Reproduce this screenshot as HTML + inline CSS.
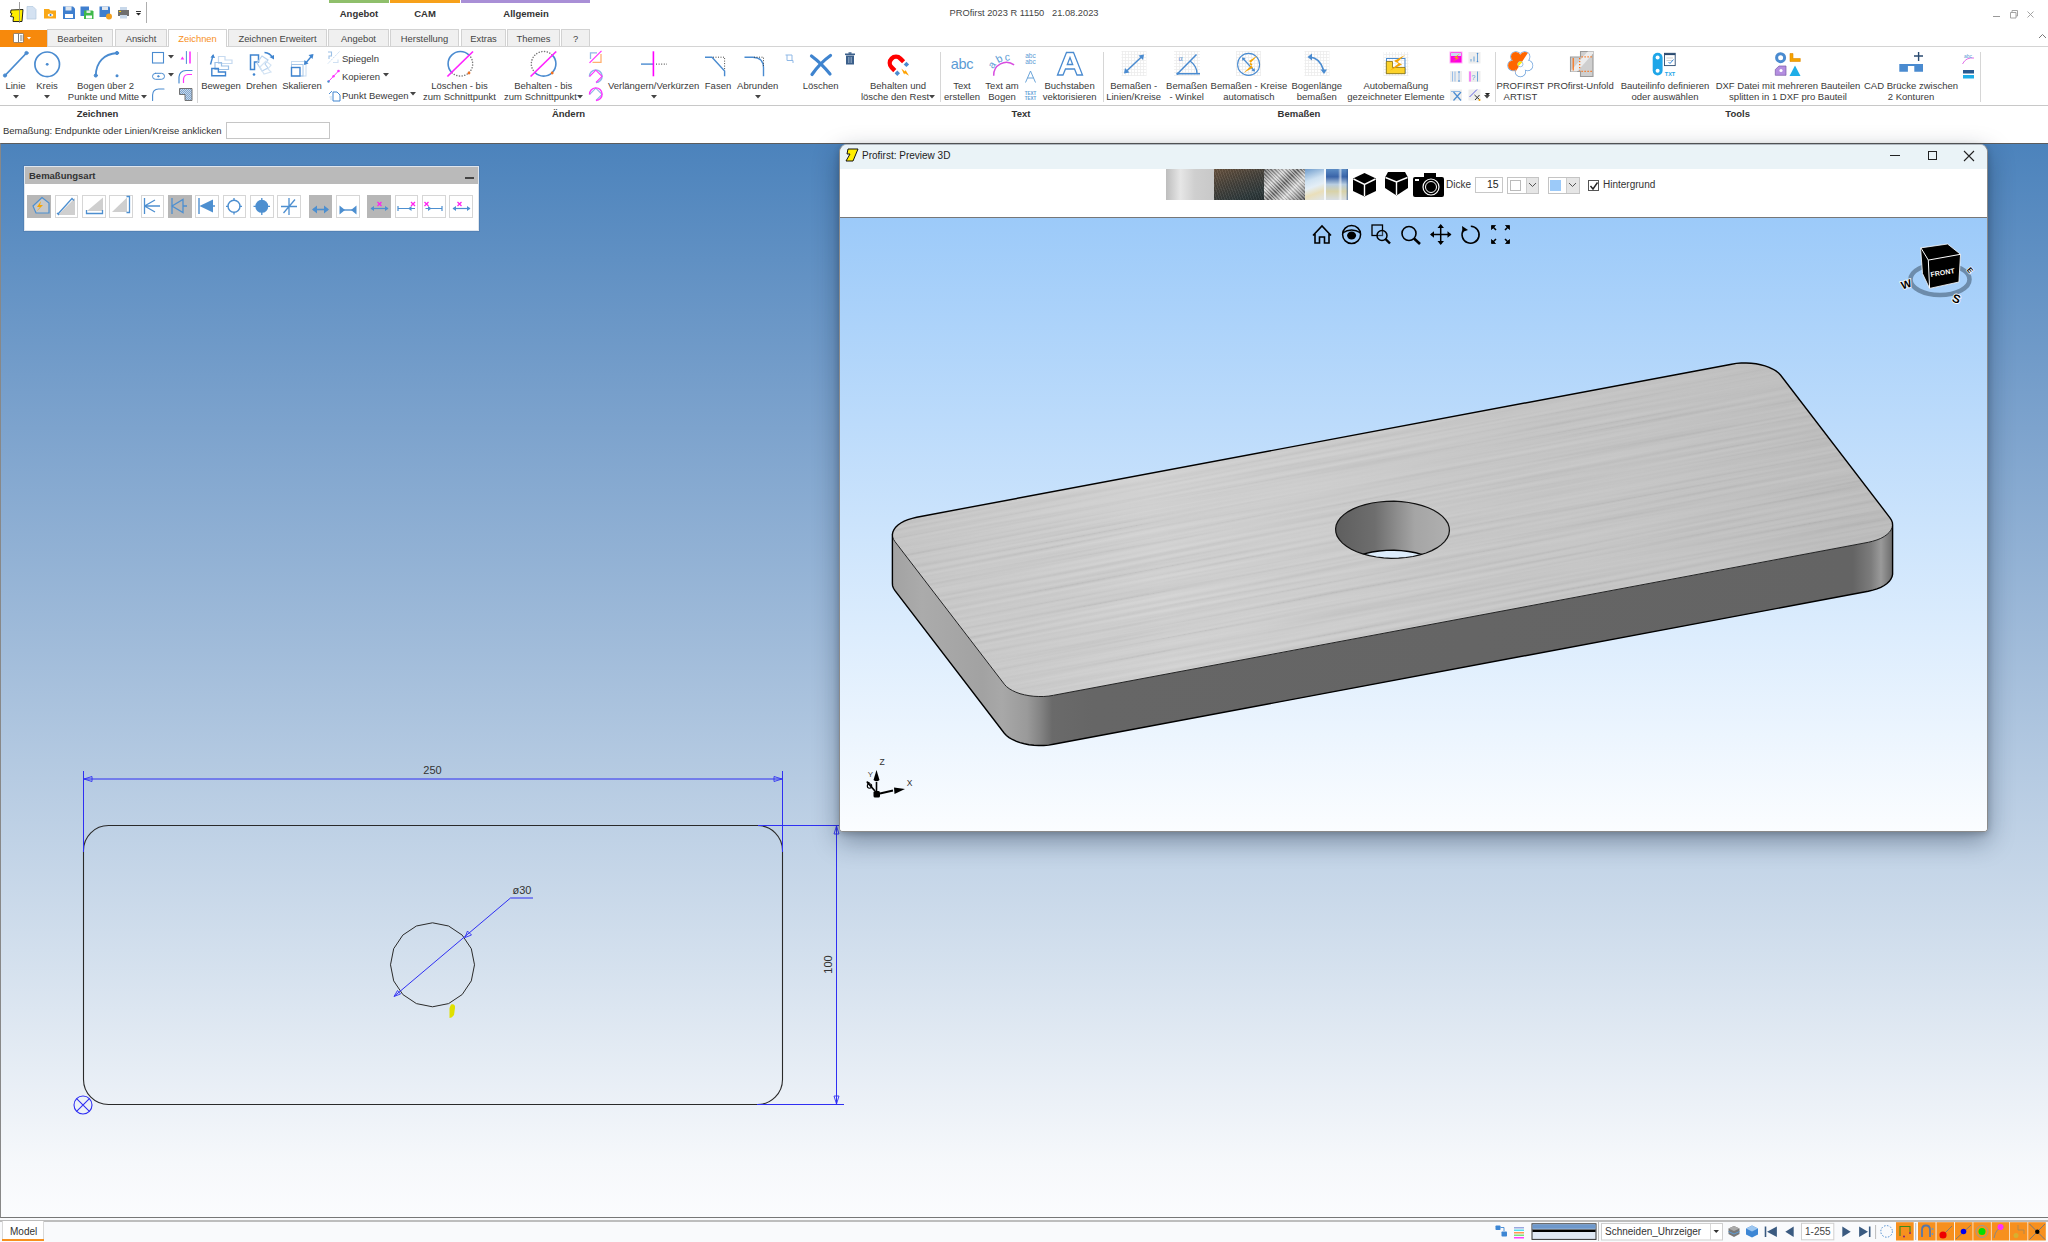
<!DOCTYPE html>
<html><head><meta charset="utf-8">
<style>
*{box-sizing:border-box}
html,body{margin:0;padding:0}
body{width:2048px;height:1242px;overflow:hidden;position:relative;background:#fff;font-family:"Liberation Sans",sans-serif;color:#333}
.a{position:absolute}
.t{position:absolute;white-space:nowrap;font-size:9.5px;line-height:11px;color:#3a3a3a}
.c{text-align:center;transform:translateX(-50%)}
.b{font-weight:bold}
svg{position:absolute;overflow:visible}
</style></head><body>

<!-- ===== TITLE BAR ===== -->
<div class="a" style="left:329px;top:0;width:60px;height:3px;background:#8fbf6b"></div>
<div class="a" style="left:390px;top:0;width:70px;height:3px;background:#f7a11a"></div>
<div class="a" style="left:461px;top:0;width:129px;height:3px;background:#a98fd6"></div>
<div class="t b c" style="left:359px;top:8px;font-size:9.5px;color:#333">Angebot</div>
<div class="t b c" style="left:425px;top:8px;font-size:9.5px;color:#333">CAM</div>
<div class="t b c" style="left:526px;top:8px;font-size:9.5px;color:#333">Allgemein</div>
<div class="t c" style="left:1024px;top:8px;font-size:9.3px;color:#444">PROfirst 2023 R 11150 &nbsp; 21.08.2023</div>

<!-- ===== TABS ===== -->
<div class="a" style="left:0;top:46px;width:2048px;height:1px;background:#d4d4d4"></div>
<!-- quick access -->
<svg style="left:0;top:0" width="160" height="28" viewBox="0 0 160 28">
<path d="M11,10 L23,9.5 L22,21.5 L13,21.5 L13.5,17 L10.5,16.5 L12,13.5 L10.5,13 Z" fill="#ffee00" stroke="#111" stroke-width="0.9"/>
<path d="M19.5,2 L19.5,23" stroke="#888" stroke-width="0.8"/>
<path d="M27,6.5 L33,6.5 L36,9.5 L36,19 L27,19 Z" fill="#d4e2f2" stroke="#b3c8e0" stroke-width="0.7"/>
<path d="M44,9 L49,9 L50.5,10.5 L56,10.5 L56,18.5 L44,18.5 Z" fill="#f9a818"/><ellipse cx="50.5" cy="15" rx="2.8" ry="1.6" fill="#fff"/><circle cx="50.5" cy="15" r="1" fill="#2a7ad8"/>
<path d="M63,6.5 L73,6.5 L75,8.5 L75,19 L63,19 Z" fill="#3f7fcf"/><rect x="65.5" y="6.5" width="6" height="4" fill="#dfe6ee"/><rect x="65" y="14" width="8" height="4" fill="#fff"/>
<path d="M80.5,6.5 L89,6.5 L89,16 L80.5,16 Z" fill="#3f7fcf"/><path d="M84,10.5 L92.5,10.5 L93.5,11.5 L93.5,19 L84,19 Z" fill="#3fb94a"/><rect x="86" y="15.5" width="6" height="3" fill="#fff"/><rect x="86.5" y="10.5" width="4" height="2.5" fill="#dfeee0"/>
<path d="M99.5,6.5 L109.5,6.5 L110,8 L110,17 L99.5,17 Z" fill="#3f7fcf"/><rect x="102" y="6.5" width="6" height="3.5" fill="#dfe6ee"/><ellipse cx="109" cy="16.5" rx="3" ry="3" fill="#f2a020"/>
<rect x="118" y="10" width="11" height="6" fill="#6f6f6f"/><rect x="120" y="7" width="7" height="3" fill="#c8d8ea"/><rect x="120" y="15" width="7" height="3.5" fill="#c8d8ea"/><rect x="119" y="11" width="2" height="1" fill="#ffd400"/>
<path d="M136,11.5 L141,11.5" stroke="#222" stroke-width="0.9"/><path d="M136,13 L141,13 L138.5,15.5 Z" fill="#222"/>
<path d="M146.5,2 L146.5,23" stroke="#999" stroke-width="0.8"/>
</svg>
<!-- window controls -->
<div class="a" style="left:1993px;top:16px;width:7px;height:1px;background:#999"></div>
<svg style="left:2009px;top:9px" width="10" height="10" viewBox="0 0 10 10"><path d="M1.5,3.5 h5.5 v5.5 h-5.5 z M3,3.5 v-2 h5.5 v5.5 h-1.5" stroke="#9a9a9a" stroke-width="0.9" fill="none"/></svg>
<svg style="left:2026px;top:10px" width="9" height="9" viewBox="0 0 9 9"><path d="M1.5,1.5 L7.5,7.5 M7.5,1.5 L1.5,7.5" stroke="#9a9a9a" stroke-width="0.9"/></svg>
<svg style="left:2038px;top:33px" width="9" height="6" viewBox="0 0 9 6"><path d="M1,5 L4.5,1.5 L8,5" stroke="#777" stroke-width="1" fill="none"/></svg>
<!-- tabs -->
<div class="a" style="left:0;top:30px;width:47px;height:17px;background:#f7890c"></div>
<svg style="left:12px;top:32px" width="24" height="12" viewBox="0 0 24 12"><rect x="1.5" y="1.5" width="10" height="9" rx="1" fill="#fff" stroke="#555" stroke-width="0.6"/><path d="M6.5,2 L6.5,10 M8,4 L10.5,4 M8,6 L10.5,6 M8,8 L10.5,8" stroke="#555" stroke-width="0.8"/><path d="M15,5 L19,5 L17,7.5 Z" fill="#fff"/></svg>
<div class="a" style="left:47px;top:29px;width:66px;height:17px;background:#f0f0f0;border:1px solid #d2d2d2;border-bottom:none"></div>
<div class="t c" style="left:80.0px;top:33px;font-size:9.4px;color:#444">Bearbeiten</div>
<div class="a" style="left:115px;top:29px;width:52px;height:17px;background:#f0f0f0;border:1px solid #d2d2d2;border-bottom:none"></div>
<div class="t c" style="left:141.0px;top:33px;font-size:9.4px;color:#444">Ansicht</div>
<div class="a" style="left:168px;top:29px;width:59px;height:18px;background:#fff;border:1px solid #d2d2d2;border-bottom:none"></div>
<div class="t c" style="left:197.5px;top:33px;font-size:9.4px;color:#f7901e">Zeichnen</div>
<div class="a" style="left:228px;top:29px;width:99px;height:17px;background:#f0f0f0;border:1px solid #d2d2d2;border-bottom:none"></div>
<div class="t c" style="left:277.5px;top:33px;font-size:9.4px;color:#444">Zeichnen Erweitert</div>
<div class="a" style="left:328px;top:29px;width:61px;height:17px;background:#f0f0f0;border:1px solid #d2d2d2;border-bottom:none"></div>
<div class="t c" style="left:358.5px;top:33px;font-size:9.4px;color:#444">Angebot</div>
<div class="a" style="left:390px;top:29px;width:69px;height:17px;background:#f0f0f0;border:1px solid #d2d2d2;border-bottom:none"></div>
<div class="t c" style="left:424.5px;top:33px;font-size:9.4px;color:#444">Herstellung</div>
<div class="a" style="left:461px;top:29px;width:45px;height:17px;background:#f0f0f0;border:1px solid #d2d2d2;border-bottom:none"></div>
<div class="t c" style="left:483.5px;top:33px;font-size:9.4px;color:#444">Extras</div>
<div class="a" style="left:507px;top:29px;width:53px;height:17px;background:#f0f0f0;border:1px solid #d2d2d2;border-bottom:none"></div>
<div class="t c" style="left:533.5px;top:33px;font-size:9.4px;color:#444">Themes</div>
<div class="a" style="left:561px;top:29px;width:29px;height:17px;background:#f0f0f0;border:1px solid #d2d2d2;border-bottom:none"></div>
<div class="t c" style="left:575.5px;top:33px;font-size:9.4px;color:#444">?</div>


<!-- ===== RIBBON ===== -->
<!--RIBICONS-->
<svg style="left:0;top:0" width="2048" height="110" viewBox="0 0 2048 110">
<defs>
<pattern id="grid" width="3" height="3" patternUnits="userSpaceOnUse"><rect width="3" height="3" fill="#fff"/><path d="M0,0.5 H3 M0.5,0 V3" stroke="#e4e4e4" stroke-width="0.8"/></pattern>
<pattern id="chk" width="2" height="2" patternUnits="userSpaceOnUse"><rect width="2" height="2" fill="#7fa6d0"/><rect width="1" height="1" fill="#c8d8ea"/><rect x="1" y="1" width="1" height="1" fill="#c8d8ea"/></pattern>
</defs>
<g stroke="#4a8bd0" fill="none" stroke-linecap="round">
<!-- Linie -->
<path d="M5,75.5 L26.5,53" stroke-width="1.8"/><circle cx="5" cy="75.5" r="1.6" fill="#4a8bd0"/><circle cx="26.5" cy="53" r="1.6" fill="#4a8bd0"/>
<!-- Kreis -->
<circle cx="47.2" cy="64.3" r="12.3" stroke-width="1.7"/><circle cx="47.2" cy="64.3" r="1.4" fill="#4a8bd0" stroke="none"/>
<!-- Bogen -->
<path d="M95.8,75.5 C96,62 104,54 117,53" stroke-width="1.8"/><circle cx="95.8" cy="75.5" r="1.6" fill="#4a8bd0"/><circle cx="117" cy="53" r="1.6" fill="#4a8bd0"/><circle cx="117" cy="75.8" r="1.5" fill="#4a8bd0" stroke="none"/>
<!-- small zeichnen -->
<rect x="152.5" y="52.5" width="11" height="10.5" stroke-width="1.1"/>
<rect x="152.5" y="73.3" width="12" height="6" rx="3" stroke-width="1"/><circle cx="158.3" cy="76.3" r="0.7" fill="#4a8bd0"/>
<path d="M152.6,100.5 L152.6,95 Q152.8,89.2 158.5,89 L164,89" stroke-width="1.1"/>
<path d="M186.4,51.5 L186.4,63.5" stroke-width="1"/>
<path d="M179,83 L179,77 Q179.5,70.8 186,70.5 L192,70.5" stroke-width="1.2"/>
</g>
<path d="M190,51.5 L190,63.5" stroke="#ff33ff" stroke-width="1.6"/>
<polygon points="182.4,56.5 180.5,59.5 184.3,59.5" fill="#ff33ff"/>
<path d="M183.5,83 L183.5,79 Q184,74.8 188,74.5 L192,74.5" stroke="#ff33ff" stroke-width="1.2" fill="none"/>
<path d="M179.5,88.5 L192,88.5 L192,100.5 L185,100.5 L185,94.5 L179.5,94.5 Z" fill="url(#chk)" stroke="#666" stroke-width="0.9"/>
<!-- Bewegen -->
<g fill="none" stroke-width="1.2">
<path d="M218.5,56.5 L225,56.5 L225,60 L232,60 L232,63.5 L218.5,63.5 Z" stroke="#c6daf0"/>
<path d="M215,62.5 L221.5,62.5 L221.5,66 L228.5,66 L228.5,69.5 L215,69.5 Z" stroke="#9cc0e6"/>
<path d="M211.8,68.5 L218.4,68.5 L218.4,72 L225.5,72 L225.5,75.8 L211.8,75.8 Z" stroke="#3f84cf" stroke-width="1.4"/>
<path d="M210.5,64.5 L213,55.5" stroke="#3f84cf" stroke-width="1.4"/>
</g>
<polygon points="213.3,54 210.5,57.5 215,58" fill="#3f84cf"/>
<!-- Drehen -->
<path d="M250.5,55 L258.5,55 L258.5,62 L254.5,62 L254.5,69.5 L250.5,69.5 Z" fill="none" stroke="#3f84cf" stroke-width="1.5"/>
<path d="M257,63 L262,56 L268,60 L265,64 L268,68 L262,71 Z" fill="none" stroke="#b8d2ee" stroke-width="1.2"/>
<path d="M260,67 L266,61 L271,65 L268,69 L271,72 L264,74 Z" fill="none" stroke="#d4e4f4" stroke-width="1.2"/>
<circle cx="254" cy="74.5" r="1.3" fill="#3f84cf"/>
<path d="M264.5,52.5 Q270,53 272.5,57.5" fill="none" stroke="#3f84cf" stroke-width="1.5"/>
<polygon points="274,59.5 269.5,57 274,55" fill="#3f84cf"/>
<!-- Skalieren -->
<rect x="291.5" y="61.5" width="14.5" height="14.5" fill="none" stroke="#c8dcf0" stroke-width="1"/>
<rect x="291.5" y="64.5" width="11.5" height="11.5" fill="none" stroke="#a6c6e8" stroke-width="1"/>
<rect x="291.5" y="67.5" width="8.5" height="8.5" fill="none" stroke="#3f84cf" stroke-width="1.4"/>
<path d="M305,64 L312.5,55" stroke="#3f84cf" stroke-width="1.4"/>
<polygon points="313.5,54 308.5,55 312.5,59" fill="#3f84cf"/><polygon points="304,65 304.5,60 308.5,63.5" fill="#3f84cf"/>
<!-- Spiegeln / Kopieren / Punkt bewegen -->
<path d="M328,52 L331.5,52 L331.5,56 L329,56 L329,59" fill="none" stroke="#9cc0e6" stroke-width="1.1"/>
<path d="M328,63.5 L340,51" stroke="#b8d2ee" stroke-width="0.9" stroke-dasharray="1.5,1"/>
<path d="M333,62.5 L338,62.5 L338,59.5" fill="none" stroke="#d0e0f2" stroke-width="1.1"/>
<path d="M328.5,81.5 L338.5,71" stroke="#ff33ff" stroke-width="1"/><circle cx="338.5" cy="71" r="1.3" fill="#ff33ff"/><circle cx="333.5" cy="76.2" r="1.2" fill="#ff33ff"/><circle cx="328.5" cy="81.5" r="1.2" fill="#4a8bd0"/>
<path d="M333,92 L337,92 L340,95 L340,101 L333,101 Z" fill="none" stroke="#3f84cf" stroke-width="1"/>
<path d="M329,94 L332,91" stroke="#3f84cf" stroke-width="0.9"/><path d="M329.5,97 L332,97 M330,99 L332,99" stroke="#b8d2ee" stroke-width="0.9"/>
<!-- Loeschen bis / Behalten bis -->
<path d="M469.1,55.1 A12.3,12.3 0 0 1 451.7,72.5" fill="none" stroke="#777" stroke-width="1.5" stroke-dasharray="0.1,2.6" stroke-linecap="round"/><path d="M451.7,72.5 A12.3,12.3 0 0 1 469.1,55.1" fill="none" stroke="#4a8bd0" stroke-width="1.6"/><path d="M447.4,76.5 L473.0,51.5" stroke="#ff22ff" stroke-width="1.7"/><circle cx="469.0" cy="73.0" r="1.4" fill="#f07020"/>
<path d="M534.9,72.5 A12.3,12.3 0 0 1 552.3,55.1" fill="none" stroke="#777" stroke-width="1.5" stroke-dasharray="0.1,2.6" stroke-linecap="round"/><path d="M552.3,55.1 A12.3,12.3 0 0 1 534.9,72.5" fill="none" stroke="#4a8bd0" stroke-width="1.6"/><path d="M530.6,76.5 L556.2,51.5" stroke="#ff22ff" stroke-width="1.7"/><circle cx="552.2" cy="73.0" r="1.4" fill="#f07020"/>
<!-- small aendern col -->
<path d="M590.5,59 L590.5,52.8 L597,52.8" fill="none" stroke="#8fb8e6" stroke-width="1.3"/>
<path d="M601,54 L601,62.3 L592.5,62.3" fill="none" stroke="#ffb070" stroke-width="1.3"/>
<path d="M589.5,62.8 L601.5,50.8" stroke="#ff33ff" stroke-width="1.2"/>
<path d="M589.5,76.5 A6.3,6.3 0 1 1 596,82.5" fill="none" stroke="#8fb8e6" stroke-width="1.5"/>
<path d="M589.5,76.5 L595.8,70.2 L602,76.3 L596,82.5" fill="none" stroke="#ff33ff" stroke-width="1.1"/>
<path d="M589.5,94.5 L595.8,88.2 L602,94.3 L596,100.5" fill="none" stroke="#8fb8e6" stroke-width="1.1"/>
<path d="M589.5,94.5 A6.3,6.3 0 1 1 596,100.5" fill="none" stroke="#ff33ff" stroke-width="1.4"/>
<!-- Verlaengern -->
<path d="M641,64.1 L653.4,64.1" stroke="#4a8bd0" stroke-width="1.4"/>
<path d="M653.4,51.3 L653.4,76.3" stroke="#ff00ff" stroke-width="1.6"/>
<path d="M656,64.1 L667,64.1" stroke="#333" stroke-width="1" stroke-dasharray="1,1.6"/>
<!-- Fasen -->
<path d="M705,57.2 L712,57.2 L724.6,71 L724.6,76.3" fill="none" stroke="#4a8bd0" stroke-width="1.4"/>
<path d="M713,57.2 L724.6,57.2 L724.6,70" fill="none" stroke="#333" stroke-width="0.9" stroke-dasharray="1,1.5"/>
<!-- Abrunden -->
<path d="M744.5,57.2 L753,57.2 Q763.5,57.5 763.5,67.8 L763.5,76.3" fill="none" stroke="#4a8bd0" stroke-width="1.4"/>
<path d="M754,57.2 L763.5,57.2 L763.5,66" fill="none" stroke="#333" stroke-width="0.9" stroke-dasharray="1,1.5"/>
<path d="M785.5,55 L787,55 L787,60.5 L793,60.5 L793,63 M787,55 L792,55 L792,60" fill="none" stroke="#8fb8e6" stroke-width="1"/>
<!-- Loeschen X -->
<path d="M811.5,56 Q821,63 830,74 M830.5,55.5 Q820,63 812,74.5" fill="none" stroke="#3f84cf" stroke-width="3.2" stroke-linecap="round"/>
<!-- trash -->
<rect x="846" y="55.5" width="8" height="9" fill="#3b5f8a"/><rect x="845" y="53.5" width="10" height="1.6" fill="#3b5f8a"/><rect x="848.5" y="52.3" width="3" height="1.5" fill="#3b5f8a"/><path d="M848.5,57 V63 M850,57 V63 M851.5,57 V63" stroke="#a8bcd4" stroke-width="0.6"/>
<!-- Magnet -->
<path d="M894.8,70.6 L891.6,67.4 A6.2,6.2 0 0 1 900.4,58.6 L903.6,61.8" fill="none" stroke="#ff0000" stroke-width="4.4"/>
<rect x="895.4" y="71.4" width="3.8" height="3.8" fill="#4a8bd0" transform="rotate(45 897.3 73.3)"/>
<rect x="904.5" y="62.5" width="3.8" height="3.8" fill="#4a8bd0" transform="rotate(45 906.4 64.4)"/>
<polygon points="901.3,68.5 905,71.5 905.5,70 909,75.8 904.8,73.2 904.2,74.5" fill="#ffa200"/>
</svg>

<svg style="left:0;top:0" width="2048" height="110" viewBox="0 0 2048 110">
<defs><pattern id="grid2" width="3" height="3" patternUnits="userSpaceOnUse"><rect width="3" height="3" fill="#fff"/><path d="M0,0.5 H3 M0.5,0 V3" stroke="#ececec" stroke-width="0.8"/></pattern></defs>
<!-- Text erstellen -->
<text x="962" y="69" font-size="14.5" fill="#5b9bd5" text-anchor="middle" font-family="Liberation Sans" letter-spacing="-0.3">abc</text>
<!-- Text am Bogen -->
<text x="0" y="3.8" font-size="10.5" fill="#5b9bd5" text-anchor="middle" font-family="Liberation Sans" transform="translate(991.6,64.6) rotate(-55)">a</text>
<text x="0" y="3.8" font-size="10.5" fill="#5b9bd5" text-anchor="middle" font-family="Liberation Sans" transform="translate(999,58.6) rotate(-28)">b</text>
<text x="0" y="3.8" font-size="10.5" fill="#5b9bd5" text-anchor="middle" font-family="Liberation Sans" transform="translate(1007.3,56.8) rotate(-5)">c</text>
<path d="M993.7,75.8 A12.8,12.8 0 0 1 1014.1,64.9" fill="none" stroke="#d84de0" stroke-width="1.5"/>
<text x="1030.5" y="57.5" font-size="6.5" fill="#5b9bd5" text-anchor="middle" font-family="Liberation Sans">abc</text>
<text x="1030.5" y="63.5" font-size="6.5" fill="#5b9bd5" text-anchor="middle" font-family="Liberation Sans">abc</text>
<path d="M1025.5,82.5 L1030.5,71 L1035.5,82.5 M1027.5,78 L1033.5,78" fill="none" stroke="#5b9bd5" stroke-width="0.9"/>
<text x="1030.5" y="94.5" font-size="4.5" font-weight="bold" fill="#5b9bd5" text-anchor="middle" font-family="Liberation Sans">TEXT</text>
<text x="1030.5" y="99.5" font-size="4.5" font-weight="bold" fill="#5b9bd5" text-anchor="middle" font-family="Liberation Sans">TEXT</text>
<!-- Buchstaben vektorisieren -->
<path d="M1057.5,75 L1066.5,52.5 L1073.5,52.5 L1082.5,75 L1077,75 L1074.5,69 L1065.5,69 L1063,75 Z M1067.3,64.5 L1072.7,64.5 L1070,57.5 Z" fill="none" stroke="#4a8bd0" stroke-width="1.3"/>
<path d="M1059.5,74 L1067.5,54 L1072.5,54 L1080.5,74" fill="none" stroke="#fff" stroke-width="0.6"/>
<!-- Bemassen Linien -->
<rect x="1121.5" y="51" width="25" height="25" fill="url(#grid2)"/>
<path d="M1125.5,72 L1142.5,56" stroke="#4a8bd0" stroke-width="1.5"/>
<polygon points="1124,73.5 1125,68 1129.5,72.5" fill="#4a8bd0"/><polygon points="1144,54.5 1138.5,55.5 1143,60" fill="#4a8bd0"/>
<!-- Winkel -->
<rect x="1174" y="51" width="26" height="25" fill="url(#grid2)"/>
<path d="M1177.5,73.8 L1200,73.8 M1177.5,73.8 L1196.5,54.5" stroke="#4a8bd0" stroke-width="1.5" fill="none"/>
<path d="M1190,61 Q1197,66 1197,73.5" stroke="#4a8bd0" stroke-width="1.4" fill="none"/><circle cx="1177.5" cy="73.8" r="1.2" fill="#4a8bd0"/>
<text x="1180.5" y="61" font-size="8" fill="#5b8fd0" text-anchor="middle" font-family="Liberation Serif">α</text>
<!-- Kreise auto -->
<rect x="1236" y="51" width="25" height="25" fill="url(#grid2)"/>
<circle cx="1248.6" cy="64.4" r="11" fill="none" stroke="#4a8bd0" stroke-width="1.1"/>
<path d="M1243,58.5 L1254,70.5" stroke="#4a8bd0" stroke-width="1.2"/><polygon points="1242,57.5 1242.5,61 1245.5,58" fill="#4a8bd0"/><polygon points="1255,71.5 1254.5,68 1251.5,71" fill="#4a8bd0"/>
<polygon points="1257.5,55.5 1249,61 1252.5,64.5 1243.5,73 1253,67.5 1249.5,64 Z" fill="#f5a300"/>
<!-- Bogenlaenge -->
<rect x="1304.5" y="51" width="25" height="25" fill="url(#grid2)"/>
<path d="M1310,57 Q1320,58 1323.5,70" fill="none" stroke="#4a8bd0" stroke-width="1.7"/>
<polygon points="1307.5,57 1312,53.5 1312,60.5" fill="#4a8bd0"/><polygon points="1324,74 1320.5,69.5 1327,69.5" fill="#4a8bd0"/>
<!-- Autobemassung -->
<rect x="1383.5" y="52" width="25" height="24" fill="url(#grid2)"/>
<rect x="1386.5" y="58.5" width="18.5" height="15" fill="none" stroke="#4a8bd0" stroke-width="1"/>
<path d="M1386.3,61.5 L1392.5,61.5 L1392.5,67.5 L1405,67.5 L1405,73.7 L1386.3,73.7 Z" fill="#fcd22a" stroke="#8a7010" stroke-width="0.8"/>
<polygon points="1405,55 1394,61 1398.5,63.5 1390,70.5 1402,64.5 1397.5,62 Z" fill="#f5a300"/>
<!-- small bemassen icons -->
<rect x="1450" y="52" width="12" height="11" fill="#ff00e0" stroke="#ffb0f8" stroke-width="1"/><rect x="1451" y="53" width="10" height="3" fill="#c8dcf0"/><polygon points="1460,53.5 1454,57.5 1456.5,58.5 1452,62 1459,58 1456.5,57 Z" fill="#f5a300"/>
<rect x="1468.5" y="52" width="12" height="11.5" fill="#eeeeee"/><path d="M1477.5,53 L1477.5,61.5 M1474,56.5 L1474,61.5 M1471,59 L1471,61.5" stroke="#5b9bd5" stroke-width="0.9"/><circle cx="1477.5" cy="53.5" r="0.8" fill="#4a8bd0"/><circle cx="1477.5" cy="61.5" r="0.8" fill="#4a8bd0"/>
<rect x="1450" y="71" width="12" height="11" fill="#eeeeee"/><path d="M1452.5,71.5 V81.5 M1455,71.5 V81.5 M1459,71.5 V81.5" stroke="#8fb8e6" stroke-width="0.9"/><circle cx="1459" cy="72" r="0.8" fill="#4a8bd0"/><circle cx="1459" cy="81" r="0.8" fill="#4a8bd0"/>
<rect x="1468.5" y="71" width="12" height="11" fill="#eeeeee"/><path d="M1470,71.5 V81.5" stroke="#ff00ff" stroke-width="0.9"/><path d="M1477.5,71.5 V81.5" stroke="#5b9bd5" stroke-width="0.9"/><text x="1473.5" y="80" font-size="7" fill="#5b9bd5" text-anchor="middle" font-family="Liberation Sans">?</text>
<rect x="1450" y="89.5" width="12" height="11" fill="#eeeeee"/><path d="M1451,91.5 H1460" stroke="#8fb8e6" stroke-width="1"/><path d="M1453.5,92 L1461,100.5 M1461,92 L1453.5,100.5" stroke="#4a8bd0" stroke-width="1.2"/>
<rect x="1468.5" y="89.5" width="12" height="11" fill="#eeeeee"/><path d="M1469.5,97 L1477,89.5" stroke="#5050e0" stroke-width="0.9"/><path d="M1474.5,95 L1480,100 M1479.5,95 L1475,100" stroke="#333" stroke-width="1"/><circle cx="1479.5" cy="100" r="1" fill="#f5a300"/>
<polygon points="1485,93 1490,93 1487.5,96" fill="#222"/>
<!-- PROFIRST ARTIST -->
<defs><clipPath id="flw"><circle cx="1515.9" cy="56.8" r="4.9"/><circle cx="1524.7" cy="56.8" r="4.9"/><circle cx="1527.6" cy="65.5" r="4.9"/><circle cx="1520.4" cy="71.5" r="4.9"/><circle cx="1513.0" cy="65.5" r="4.9"/><circle cx="1520.4" cy="63.5" r="4.9"/></clipPath></defs>
<circle cx="1515.9" cy="56.8" r="5" fill="none" stroke="#6aa0dc" stroke-width="1.3"/><circle cx="1524.7" cy="56.8" r="5" fill="none" stroke="#6aa0dc" stroke-width="1.3"/><circle cx="1527.6" cy="65.5" r="5" fill="none" stroke="#6aa0dc" stroke-width="1.3"/><circle cx="1520.4" cy="71.5" r="5" fill="none" stroke="#6aa0dc" stroke-width="1.3"/><circle cx="1513.0" cy="65.5" r="5" fill="none" stroke="#6aa0dc" stroke-width="1.3"/><circle cx="1515.9" cy="56.8" r="4.9" fill="#fff"/><circle cx="1524.7" cy="56.8" r="4.9" fill="#fff"/><circle cx="1527.6" cy="65.5" r="4.9" fill="#fff"/><circle cx="1520.4" cy="71.5" r="4.9" fill="#fff"/><circle cx="1513.0" cy="65.5" r="4.9" fill="#fff"/><circle cx="1520.4" cy="63.5" r="4.9" fill="#fff"/><polygon points="1500,40 1528.5,52 1515,72.5 1500,80" fill="#ff6600" clip-path="url(#flw)"/>
<circle cx="1520.4" cy="64.2" r="2.6" fill="#fff" stroke="#9cc0e6" stroke-width="1"/><path d="M1522.2,62.3 A2.6,2.6 0 1 0 1518.6,66.1 Z" fill="#ffee00"/>
<!-- Unfold -->
<defs><clipPath id="unf"><path d="M1580.5,51.5 H1593 V76.5 H1580.5 V71.5 H1570.5 V57 H1580.5 Z"/></clipPath></defs>
<path d="M1580.5,51.5 H1593 V76.5 H1580.5 V71.5 H1570.5 V57 H1580.5 Z" fill="#cfcfcf" stroke="#9a9a9a" stroke-width="1.1"/>
<polygon points="1568,74 1575,74 1596,50 1589,50" fill="#ececec" clip-path="url(#unf)"/>
<path d="M1581.5,56.9 H1592.5 M1581.5,71.3 H1592.5 M1579.7,58 V70.5" stroke="#ff6600" stroke-width="1.2" stroke-dasharray="1.2,1.8"/>
<path d="M1573.2,58 V70.5" stroke="#ff6600" stroke-width="1.1"/>
<!-- Bauteilinfo -->
<rect x="1652.7" y="52.7" width="9.9" height="22.8" rx="5" fill="#1fa6e8"/><circle cx="1657.6" cy="57.5" r="2" fill="#fff"/><circle cx="1657.6" cy="70.8" r="2" fill="#fff"/>
<rect x="1664.5" y="53.3" width="10.7" height="12.3" fill="#fff" stroke="#2a4a70" stroke-width="0.9"/><rect x="1664.5" y="53.3" width="10.7" height="1.8" fill="#2a4a70"/>
<path d="M1666.5,58 H1673 M1666.5,60.5 H1673" stroke="#bbb" stroke-width="0.7"/><path d="M1668.5,62 L1670,63.5 L1673.5,59.5" stroke="#1f7ad8" stroke-width="0.9" fill="none"/>
<text x="1670" y="75.5" font-size="5.5" font-weight="bold" fill="#1fa6e8" text-anchor="middle" font-family="Liberation Sans">TXT</text>
<!-- DXF -->
<circle cx="1780.6" cy="57.7" r="4" fill="none" stroke="#4a8bd0" stroke-width="3"/>
<path d="M1790,53.5 L1793,53.5 L1793,58.5 L1800.3,58.5 L1800.3,61.5 L1790,61.5 Z" fill="#f5a300" stroke="#e08a00" stroke-width="0.6"/>
<path d="M1775.3,69.5 L1779,66 L1786,66 L1786,75.3 L1775.3,75.3 Z" fill="#b48ee0" stroke="#7a5aa8" stroke-width="0.7"/><circle cx="1781" cy="70.5" r="1.6" fill="#fff"/>
<polygon points="1795,65.5 1789.5,76 1800.5,76" fill="#1faee8"/>
<!-- CAD Bruecke -->
<path d="M1918.6,52 V61 M1914,56 H1923" stroke="#2a4a70" stroke-width="1.4"/>
<path d="M1899.3,64 L1923,64 L1923,71.8 L1914.3,71.8 L1914.3,66 L1907.9,66 L1907.9,71.8 L1899.3,71.8 Z" fill="#4a8bd0"/>
<!-- tools small -->
<path d="M1962.5,64 Q1966,57 1974,58" fill="none" stroke="#e070e8" stroke-width="1"/>
<text x="1964" y="58" font-size="5" fill="#5b9bd5" font-family="Liberation Sans">abc</text>
<rect x="1963" y="70" width="11" height="3.5" fill="#2a5a90"/><rect x="1963" y="75" width="11" height="3.5" fill="#1faee8"/>
</svg>

<!--/RIBICONS-->
<!-- ribbon labels -->
<div class="t c" style="left:15.5px;top:80px">Linie</div>
<svg style="left:12.5px;top:95px" width="6" height="4" viewBox="0 0 6 4"><path d="M0,0 L6,0 L3,3.5 Z" fill="#444"/></svg>
<div class="t c" style="left:47px;top:80px">Kreis</div>
<svg style="left:44px;top:95px" width="6" height="4" viewBox="0 0 6 4"><path d="M0,0 L6,0 L3,3.5 Z" fill="#444"/></svg>
<div class="t c" style="left:105.5px;top:80px">Bogen über 2</div>
<div class="t c" style="left:103.5px;top:91px">Punkte und Mitte</div>
<div class="t c" style="left:221px;top:80px">Bewegen</div>
<div class="t c" style="left:261.5px;top:80px">Drehen</div>
<div class="t c" style="left:302px;top:80px">Skalieren</div>
<div class="t c" style="left:459.5px;top:80px">Löschen - bis</div>
<div class="t c" style="left:459.5px;top:91px">zum Schnittpunkt</div>
<div class="t c" style="left:543.3px;top:80px">Behalten - bis</div>
<div class="t c" style="left:540.5px;top:91px">zum Schnittpunkt</div>
<div class="t c" style="left:653.6px;top:80px">Verlängern/Verkürzen</div>
<svg style="left:650.6px;top:95px" width="6" height="4" viewBox="0 0 6 4"><path d="M0,0 L6,0 L3,3.5 Z" fill="#444"/></svg>
<div class="t c" style="left:718px;top:80px">Fasen</div>
<div class="t c" style="left:757.7px;top:80px">Abrunden</div>
<svg style="left:754.7px;top:95px" width="6" height="4" viewBox="0 0 6 4"><path d="M0,0 L6,0 L3,3.5 Z" fill="#444"/></svg>
<div class="t c" style="left:820.6px;top:80px">Löschen</div>
<div class="t c" style="left:898px;top:80px">Behalten und</div>
<div class="t c" style="left:895px;top:91px">lösche den Rest</div>
<div class="t c" style="left:962px;top:80px">Text</div>
<div class="t c" style="left:962px;top:91px">erstellen</div>
<div class="t c" style="left:1002px;top:80px">Text am</div>
<div class="t c" style="left:1002px;top:91px">Bogen</div>
<div class="t c" style="left:1069.6px;top:80px">Buchstaben</div>
<div class="t c" style="left:1069.6px;top:91px">vektorisieren</div>
<div class="t c" style="left:1133.7px;top:80px">Bemaßen -</div>
<div class="t c" style="left:1133.7px;top:91px">Linien/Kreise</div>
<div class="t c" style="left:1186.7px;top:80px">Bemaßen</div>
<div class="t c" style="left:1186.7px;top:91px">- Winkel</div>
<div class="t c" style="left:1248.9px;top:80px">Bemaßen - Kreise</div>
<div class="t c" style="left:1248.9px;top:91px">automatisch</div>
<div class="t c" style="left:1316.8px;top:80px">Bogenlänge</div>
<div class="t c" style="left:1316.8px;top:91px">bemaßen</div>
<div class="t c" style="left:1395.9px;top:80px">Autobemaßung</div>
<div class="t c" style="left:1395.9px;top:91px">gezeichneter Elemente</div>
<div class="t c" style="left:1520.4px;top:80px">PROFIRST</div>
<div class="t c" style="left:1520.4px;top:91px">ARTIST</div>
<div class="t c" style="left:1580.5px;top:80px">PROfirst-Unfold</div>
<div class="t c" style="left:1665px;top:80px">Bauteilinfo definieren</div>
<div class="t c" style="left:1665px;top:91px">oder auswählen</div>
<div class="t c" style="left:1788px;top:80px">DXF Datei mit mehreren Bauteilen</div>
<div class="t c" style="left:1788px;top:91px">splitten in 1 DXF pro Bauteil</div>
<div class="t c" style="left:1911px;top:80px">CAD Brücke zwischen</div>
<div class="t c" style="left:1911px;top:91px">2 Konturen</div>
<svg style="left:140.5px;top:95px" width="6" height="4" viewBox="0 0 6 4"><path d="M0,0 L6,0 L3,3.5 Z" fill="#444"/></svg>
<svg style="left:577px;top:95px" width="6" height="4" viewBox="0 0 6 4"><path d="M0,0 L6,0 L3,3.5 Z" fill="#444"/></svg>
<svg style="left:929px;top:95px" width="6" height="4" viewBox="0 0 6 4"><path d="M0,0 L6,0 L3,3.5 Z" fill="#444"/></svg>
<svg style="left:1484px;top:95px" width="6" height="4" viewBox="0 0 6 4"><path d="M0,0 L6,0 L3,3.5 Z" fill="#444"/></svg>
<div class="t" style="left:342px;top:53px">Spiegeln</div>
<div class="t" style="left:342px;top:71px">Kopieren</div>
<div class="t" style="left:342px;top:90px">Punkt Bewegen</div>
<svg style="left:383px;top:73px" width="6" height="4" viewBox="0 0 6 4"><path d="M0,0 L6,0 L3,3.5 Z" fill="#444"/></svg>
<svg style="left:410px;top:92px" width="6" height="4" viewBox="0 0 6 4"><path d="M0,0 L6,0 L3,3.5 Z" fill="#444"/></svg>
<svg style="left:168px;top:55px" width="6" height="4" viewBox="0 0 6 4"><path d="M0,0 L6,0 L3,3.5 Z" fill="#444"/></svg>
<svg style="left:168px;top:73px" width="6" height="4" viewBox="0 0 6 4"><path d="M0,0 L6,0 L3,3.5 Z" fill="#444"/></svg>
<div class="t b c" style="left:97.5px;top:108px;font-size:9.5px;color:#333">Zeichnen</div>
<div class="t b c" style="left:568.5px;top:108px;font-size:9.5px;color:#333">Ändern</div>
<div class="t b c" style="left:1021px;top:108px;font-size:9.5px;color:#333">Text</div>
<div class="t b c" style="left:1299px;top:108px;font-size:9.5px;color:#333">Bemaßen</div>
<div class="t b c" style="left:1737.7px;top:108px;font-size:9.5px;color:#333">Tools</div>
<div class="a" style="left:197px;top:52px;width:1px;height:51px;background:#d6d6d6"></div>
<div class="a" style="left:940px;top:52px;width:1px;height:50px;background:#d6d6d6"></div>
<div class="a" style="left:1102.5px;top:52px;width:1px;height:50px;background:#d6d6d6"></div>
<div class="a" style="left:1495px;top:52px;width:1px;height:50px;background:#d6d6d6"></div>
<div class="a" style="left:1980px;top:52px;width:1px;height:50px;background:#d6d6d6"></div>
<div class="t" style="left:3px;top:125px;font-size:9.5px;color:#333">Bemaßung: Endpunkte oder Linien/Kreise anklicken</div>
<div class="a" style="left:226px;top:122px;width:104px;height:17px;border:1px solid #c6c6c6;background:#fff"></div>

<div class="a" style="left:0;top:105px;width:2048px;height:1px;background:#c8c8c8"></div>

<!-- ===== CANVAS ===== -->
<div class="a" style="left:0;top:143px;width:2048px;height:1075px;background:linear-gradient(#4c83bc 0%,#7aa1cc 24.8%,#a1bcda 47.2%,#d2dfed 75.1%,#f6f8fb 95%,#fbfcfe 100%);border-top:1px solid #5c5c5c;border-left:1px solid #888;border-bottom:1px solid #777"></div>


<!-- ===== FLOATING PANEL ===== -->
<div class="a" style="left:24px;top:166px;width:455px;height:65px;background:#fff;border:1px solid #dfe6ee;box-shadow:0 0 0 1px rgba(60,100,150,0.25)"></div>
<div class="a" style="left:25px;top:167px;width:453px;height:17px;background:#bababa"></div>
<div class="t b" style="left:29px;top:170px;font-size:9.5px;color:#333">Bemaßungsart</div>
<div class="a" style="left:465px;top:177px;width:9px;height:2px;background:#444"></div>
<div class="a" style="left:27.3px;top:194.5px;width:23.6px;height:23.5px;background:#b7b7b7"></div>
<div class="a" style="left:54.7px;top:194.5px;width:23.6px;height:23.5px;background:#fff;border:1px solid #d6d6d6"></div>
<div class="a" style="left:82.3px;top:194.5px;width:23.6px;height:23.5px;background:#fff;border:1px solid #d6d6d6"></div>
<div class="a" style="left:109.4px;top:194.5px;width:23.6px;height:23.5px;background:#fff;border:1px solid #d6d6d6"></div>
<div class="a" style="left:140.5px;top:194.5px;width:23.6px;height:23.5px;background:#fff;border:1px solid #d6d6d6"></div>
<div class="a" style="left:168.3px;top:194.5px;width:23.6px;height:23.5px;background:#b7b7b7"></div>
<div class="a" style="left:195.3px;top:194.5px;width:23.6px;height:23.5px;background:#fff;border:1px solid #d6d6d6"></div>
<div class="a" style="left:222.5px;top:194.5px;width:23.6px;height:23.5px;background:#fff;border:1px solid #d6d6d6"></div>
<div class="a" style="left:250.0px;top:194.5px;width:23.6px;height:23.5px;background:#fff;border:1px solid #d6d6d6"></div>
<div class="a" style="left:277.3px;top:194.5px;width:23.6px;height:23.5px;background:#fff;border:1px solid #d6d6d6"></div>
<div class="a" style="left:308.5px;top:194.5px;width:23.6px;height:23.5px;background:#b7b7b7"></div>
<div class="a" style="left:336.0px;top:194.5px;width:23.6px;height:23.5px;background:#fff;border:1px solid #d6d6d6"></div>
<div class="a" style="left:367.2px;top:194.5px;width:23.6px;height:23.5px;background:#b7b7b7"></div>
<div class="a" style="left:394.5px;top:194.5px;width:23.6px;height:23.5px;background:#fff;border:1px solid #d6d6d6"></div>
<div class="a" style="left:422.0px;top:194.5px;width:23.6px;height:23.5px;background:#fff;border:1px solid #d6d6d6"></div>
<div class="a" style="left:449.2px;top:194.5px;width:23.6px;height:23.5px;background:#fff;border:1px solid #d6d6d6"></div>
<svg style="left:0;top:0" width="2048" height="1242" viewBox="0 0 2048 1242"><path d="M33,206 L42,197.5 L49,203 L49,213 L36,213 Z" fill="#c8c8c8" stroke="#4d8fd0" stroke-width="1.2"/><path d="M41,201 L37,207 L40,207 L36,212 L43,205 L40,205 Z" fill="#f7a500"/><polygon points="58,215 75,198 75,215" fill="#cfcfcf"/><path d="M58,214 L72,198.5 L74,200.5" stroke="#4d8fd0" stroke-width="1.3" fill="none"/><path d="M57,213 L59,215" stroke="#4d8fd0" stroke-width="1.2"/><polygon points="87,211 103,197.5 103,211" fill="#cfcfcf"/><path d="M86.5,210 L86.5,213.5 L102.5,213.5 L102.5,210" stroke="#4d8fd0" stroke-width="1.3" fill="none"/><polygon points="112,212 127,197.5 127,212" fill="#cfcfcf"/><path d="M126.5,196.5 L129.5,196.5 L129.5,212.5 L126.5,212.5" stroke="#4d8fd0" stroke-width="1.3" fill="none"/><path d="M144.5,198 L144.5,214 M144.5,206 L160,206 M144.5,206 L155,200 M144.5,206 L155,212" stroke="#4d8fd0" stroke-width="1.3" fill="none"/><path d="M172,198 L172,214 M172,206 L183,199.5 L183,212.5 Z M183,206 L187,206" stroke="#4d8fd0" stroke-width="1.3" fill="none"/><path d="M199,198 L199,214" stroke="#4d8fd0" stroke-width="1.4"/><polygon points="199.5,206 213,199.5 213,212.5" fill="#4d8fd0"/><path d="M213,206 L215,206" stroke="#4d8fd0" stroke-width="1.3"/><circle cx="234" cy="206.3" r="6" stroke="#4d8fd0" stroke-width="1.4" fill="none"/><path d="M234,198 L234,200.5 M234,212 L234,214.5 M226,206.3 L228.5,206.3 M239.5,206.3 L242,206.3" stroke="#4d8fd0" stroke-width="1.3"/><circle cx="261.8" cy="206.3" r="6.5" fill="#4d8fd0"/><path d="M261.8,198 L261.8,215 M253.5,206.3 L270,206.3" stroke="#4d8fd0" stroke-width="1.3"/><path d="M289,198 L289,215 M281,206.5 L297,206.5 M283.5,213 L295,199.5" stroke="#4d8fd0" stroke-width="1.3"/><path d="M313,209.5 L328,209.5" stroke="#4d8fd0" stroke-width="1.6"/><polygon points="312,209.5 317,205.5 317,213.5" fill="#4d8fd0"/><polygon points="329,209.5 324,205.5 324,213.5" fill="#4d8fd0"/><path d="M340,210 L356,210" stroke="#4d8fd0" stroke-width="1.4"/><polygon points="339.5,205.5 345,210 339.5,214.5" fill="#4d8fd0"/><polygon points="356.5,205.5 351,210 356.5,214.5" fill="#4d8fd0"/><path d="M371,208.5 L388,208.5" stroke="#4d8fd0" stroke-width="1.2"/><polygon points="370.5,208.5 374,206 374,211" fill="#4d8fd0"/><polygon points="388.5,208.5 385,206 385,211" fill="#4d8fd0"/><path d="M377.5,202 L381.5,206 M381.5,202 L377.5,206" stroke="#ff22ee" stroke-width="1.3"/><path d="M398,208.5 L415,208.5 M398,206 L398,211" stroke="#4d8fd0" stroke-width="1.2"/><polygon points="408,208.5 411.5,206 411.5,211" fill="#4d8fd0"/><path d="M411,202 L415,206 M415,202 L411,206" stroke="#ff22ee" stroke-width="1.3"/><path d="M425.5,208.5 L442,208.5 M442,206 L442,211" stroke="#4d8fd0" stroke-width="1.2"/><polygon points="431.5,208.5 428,206 428,211" fill="#4d8fd0"/><path d="M424.5,202 L428.5,206 M428.5,202 L424.5,206" stroke="#ff22ee" stroke-width="1.3"/><path d="M453,208.5 L470,208.5" stroke="#4d8fd0" stroke-width="1.2"/><polygon points="452.5,208.5 456,206 456,211" fill="#4d8fd0"/><polygon points="470.5,208.5 467,206 467,211" fill="#4d8fd0"/><path d="M457.5,202 L461.5,206 M461.5,202 L457.5,206" stroke="#ff22ee" stroke-width="1.3"/></svg>
<!-- ===== 2D DRAWING ===== -->
<svg style="left:0;top:0" width="2048" height="1242" viewBox="0 0 2048 1242">
<rect x="83.5" y="825.5" width="699" height="279" rx="25" ry="25" fill="none" stroke="#2a2a2a" stroke-width="1.1"/>
<polygon points="432.5,922.8 448.6,926.0 462.2,935.1 471.3,948.7 474.5,964.8 471.3,980.9 462.2,994.5 448.6,1003.6 432.5,1006.8 416.4,1003.6 402.8,994.5 393.7,980.9 390.5,964.8 393.7,948.7 402.8,935.1 416.4,926.0" fill="none" stroke="#2a2a2a" stroke-width="1"/>
<path d="M83.5,771 L83.5,852 M782.5,771 L782.5,852 M84,779 L782,779 M758,825.5 L842,825.5 M757,1104.5 L844,1104.5 M836.5,826 L836.5,1104" stroke="#2f2ff2" stroke-width="1" fill="none"/>
<polygon points="84,779 92,776.5 92,781.5" fill="none" stroke="#2f2ff2" stroke-width="0.9"/>
<polygon points="782,779 774,776.5 774,781.5" fill="none" stroke="#2f2ff2" stroke-width="0.9"/>
<polygon points="836.5,826 834,834 839,834" fill="none" stroke="#2f2ff2" stroke-width="0.9"/>
<polygon points="836.5,1104 834,1096 839,1096" fill="none" stroke="#2f2ff2" stroke-width="0.9"/>
<path d="M394.5,996 L510.5,898 L533,898" stroke="#2f2ff2" stroke-width="1" fill="none"/>
<polygon points="394,996.5 397.5,990.5 400.5,994" fill="none" stroke="#2f2ff2" stroke-width="0.9"/>
<polygon points="465,937.5 467.5,931 471.5,935" fill="none" stroke="#2f2ff2" stroke-width="0.9"/>
<text x="432.5" y="774" font-size="11" fill="#333" text-anchor="middle" font-family="Liberation Sans">250</text>
<text x="522" y="894" font-size="11" fill="#333" text-anchor="middle" font-family="Liberation Sans">ø30</text>
<text x="0" y="0" font-size="11" fill="#333" text-anchor="middle" font-family="Liberation Sans" transform="translate(831.5,964.5) rotate(-90)">100</text>
<circle cx="83" cy="1105" r="9" fill="none" stroke="#2f2ff2" stroke-width="1.1"/>
<path d="M76.6,1098.6 L89.4,1111.4 M89.4,1098.6 L76.6,1111.4" stroke="#2f2ff2" stroke-width="1.1"/>
<path d="M451,1004.5 Q455.5,1003.5 455,1008 L454,1015 Q452,1018 449.5,1018 L449.5,1008 Z" fill="#e0e000"/>
</svg>

<!-- ===== PREVIEW WINDOW ===== -->
<div class="a" style="left:839px;top:144px;width:1149px;height:688px;border-radius:8px 8px 4px 4px;box-shadow:0 9px 26px rgba(10,25,50,0.38),0 2px 6px rgba(0,0,0,0.2)"></div>
<div class="a" style="left:839px;top:144px;width:1149px;height:688px;border-radius:8px 8px 4px 4px;background:#fff;overflow:hidden;border:1px solid #8a8a8a;border-top-color:#b0b8c0">
  <div class="a" style="left:0;top:0;width:1149px;height:24px;background:#eaf3f7"></div>
  <div class="a" style="left:0;top:72px;width:1149px;height:1px;background:#777"></div>
  <div class="a" style="left:0;top:73px;width:1149px;height:614px;background:linear-gradient(#9ccaf9,#fbfdff)"></div>
</div>

<!-- preview title -->
<svg style="left:845px;top:148px" width="14" height="14" viewBox="0 0 14 14"><polygon points="3,1 13,1 8,13 1,13 5,6 2,6" fill="#ffee00" stroke="#111" stroke-width="1"/></svg>
<div class="t" style="left:862px;top:150px;font-size:10px;color:#222">Profirst: Preview 3D</div>
<div class="a" style="left:1890px;top:155px;width:10px;height:1px;background:#222"></div>
<div class="a" style="left:1928px;top:151px;width:9px;height:9px;border:1px solid #222"></div>
<svg style="left:1963px;top:150px" width="12" height="12" viewBox="0 0 12 12"><path d="M1,1 L11,11 M11,1 L1,11" stroke="#222" stroke-width="1.1"/></svg>
<!-- toolbar swatches -->
<div class="a" style="left:1166px;top:169px;width:48px;height:31px;background:linear-gradient(90deg,#bdbdbd,#e6e6e6 30%,#cfcfcf 60%,#c8c8c8)"></div>
<div class="a" style="left:1214px;top:169px;width:50px;height:31px;background:repeating-linear-gradient(70deg,rgba(255,255,255,0.06) 0 1px,rgba(0,0,0,0.08) 1px 2.5px),linear-gradient(160deg,#6a5440,#45423c 45%,#2f3a3c 80%,#263032)"></div>
<div class="a" style="left:1264px;top:169px;width:41px;height:31px;background:linear-gradient(135deg,rgba(40,40,40,0.35) 0%,rgba(255,255,255,0.45) 30%,rgba(40,40,40,0.2) 48%,rgba(255,255,255,0.55) 68%,rgba(30,30,30,0.4) 100%),repeating-linear-gradient(45deg,#6a6a6a 0 1.3px,#c4c4c4 1.3px 2.6px)"></div>
<div class="a" style="left:1305px;top:169px;width:19px;height:31px;background:linear-gradient(160deg,#6f9ccc 0%,#cfe2f2 35%,#e4eef6 55%,#eadfba 75%,#dfe5ea 100%)"></div><div class="a" style="left:1324px;top:169px;width:2px;height:31px;background:#f4f8fb"></div><div class="a" style="left:1326px;top:169px;width:22px;height:31px;background:linear-gradient(90deg,rgba(255,255,255,0) 55%,rgba(255,255,255,0.6) 65%,rgba(255,255,255,0) 75%,rgba(255,255,255,0) 92%,rgba(40,80,140,0.5) 95%),linear-gradient(#5b8cc4 0%,#3a64a8 25%,#b8cde0 50%,#d8d2a8 72%,#d8dee4 100%)"></div>
<svg style="left:1352px;top:172px" width="25" height="25" viewBox="0 0 25 25"><polygon points="12.5,1 24,6.5 24,19 12.5,24.5 1,19 1,6.5" fill="#000"/><path d="M1.5,7 L12.5,12.5 L23.5,7 M12.5,12.5 L12.5,24" stroke="#fff" stroke-width="1.4" fill="none"/></svg>
<svg style="left:1384px;top:171px" width="25" height="25" viewBox="0 0 25 25"><polygon points="4,1 21,1 24,6.5 24,17 12.5,24.5 1,17 1,6.5" fill="#000"/><path d="M1.5,6.5 L12.5,11 L23.5,6.5 M12.5,11 L12.5,24" stroke="#fff" stroke-width="1.4" fill="none"/></svg>
<svg style="left:1412px;top:172px" width="33" height="26" viewBox="0 0 33 26"><rect x="1" y="5" width="31" height="20" rx="2" fill="#000"/><rect x="12" y="1" width="12" height="5" fill="#000"/><circle cx="19" cy="15" r="8" fill="none" stroke="#fff" stroke-width="1.2"/><circle cx="19" cy="15" r="5.5" fill="none" stroke="#fff" stroke-width="1"/><rect x="3" y="7" width="4" height="2" fill="#fff"/></svg>
<div class="t" style="left:1446px;top:179px;font-size:10px;color:#333">Dicke</div>
<div class="a" style="left:1475px;top:177px;width:28px;height:16px;border:1px solid #c8c8c8;background:#fff"></div>
<div class="t" style="left:1487px;top:179px;font-size:10.5px;color:#222">15</div>
<div class="a" style="left:1507px;top:177px;width:32px;height:17px;border:1px solid #c4c4c4;background:#fff"></div>
<div class="a" style="left:1510px;top:180px;width:11px;height:11px;border:1px solid #bbb;background:#fff"></div>
<div class="a" style="left:1526px;top:178px;width:12px;height:15px;background:#e6e6e6;border-left:1px solid #ccc"></div>
<svg style="left:1528px;top:182px" width="9" height="6" viewBox="0 0 9 6"><path d="M1,1 L4.5,4.5 L8,1" stroke="#555" fill="none" stroke-width="1"/></svg>
<div class="a" style="left:1548px;top:177px;width:32px;height:17px;border:1px solid #c4c4c4;background:#fff"></div>
<div class="a" style="left:1550px;top:180px;width:11px;height:11px;background:#9ccaf9"></div>
<div class="a" style="left:1566px;top:178px;width:13px;height:15px;background:#e6e6e6;border-left:1px solid #ccc"></div>
<svg style="left:1568px;top:182px" width="9" height="6" viewBox="0 0 9 6"><path d="M1,1 L4.5,4.5 L8,1" stroke="#555" fill="none" stroke-width="1"/></svg>
<div class="a" style="left:1588px;top:180px;width:11px;height:11px;border:1px solid #555;background:#fff"></div>
<svg style="left:1589px;top:181px" width="10" height="10" viewBox="0 0 10 10"><path d="M1.5,5 L4,8 L8.5,1.5" stroke="#222" fill="none" stroke-width="1.4"/></svg>
<div class="t" style="left:1603px;top:179px;font-size:10px;color:#333">Hintergrund</div>
<!-- nav icons -->
<svg style="left:1310px;top:223px" width="205" height="24" viewBox="1310 223 205 24">
<path d="M1313,235.5 L1322,226 L1331,235.5 M1315,234 L1315,243 L1319.5,243 L1319.5,237 L1324.5,237 L1324.5,243 L1329,243 L1329,234" stroke="#000" stroke-width="1.6" fill="none"/>
<circle cx="1351.6" cy="234.5" r="9" stroke="#000" stroke-width="1.5" fill="none"/><path d="M1342.5,233 Q1351.6,227 1360.7,233" stroke="#000" stroke-width="1.4" fill="none"/><ellipse cx="1351.6" cy="235.5" rx="4.5" ry="4" fill="#000"/>
<rect x="1372" y="225" width="10.5" height="10.5" stroke="#000" stroke-width="1.3" fill="none"/><circle cx="1382" cy="235.5" r="5" stroke="#000" stroke-width="1.5" fill="#9ccaf9" fill-opacity="0.3"/><path d="M1385.5,239 L1390,243.5" stroke="#000" stroke-width="2.4"/>
<circle cx="1409" cy="233.5" r="7" stroke="#000" stroke-width="1.6" fill="none"/><path d="M1414,238.5 L1420,244" stroke="#000" stroke-width="2.6"/>
<path d="M1440.7,225 L1440.7,244 M1431,234.5 L1450.5,234.5" stroke="#000" stroke-width="1.5"/><path d="M1440.7,224 L1437.5,228 L1444,228 Z M1440.7,245 L1437.5,241 L1444,241 Z M1430,234.5 L1434,231.3 L1434,237.7 Z M1451.5,234.5 L1447.5,231.3 L1447.5,237.7 Z" fill="#000"/>
<path d="M1463.5,230 A8.5,8.5 0 1 0 1470.8,226.2" stroke="#000" stroke-width="1.6" fill="none"/><path d="M1462,226 L1462.5,232 L1468,230 Z" fill="#000"/>
<path d="M1492,226 L1496,230 M1509,226 L1505,230 M1492,243 L1496,239 M1509,243 L1505,239" stroke="#000" stroke-width="1.6"/><path d="M1491.5,225.5 L1495.5,225.5 L1491.5,229.5 Z M1509.5,225.5 L1505.5,225.5 L1509.5,229.5 Z M1491.5,243.5 L1495.5,243.5 L1491.5,239.5 Z M1509.5,243.5 L1505.5,243.5 L1509.5,239.5 Z" fill="#000" stroke="#000" stroke-width="0.8"/>
</svg>
<!-- view cube -->
<svg style="left:1895px;top:238px" width="85" height="75" viewBox="1895 238 85 75">
<ellipse cx="1940" cy="279.5" rx="29.5" ry="15.5" stroke="#6d8cab" stroke-width="4.5" fill="none"/>
<polygon points="1920.6,247.9 1947.6,244 1960.5,254.3 1958.9,282 1929.6,288.4 1922.5,273.6" fill="#000" stroke="#fff" stroke-width="0.8"/>
<path d="M1921,248 L1928.3,260.1 L1960.5,254.3 M1928.3,260.1 L1929.6,288.4" stroke="#fff" stroke-width="1" fill="none"/>
<text x="1943" y="275" font-size="7" font-weight="bold" fill="#fff" text-anchor="middle" transform="rotate(-10 1943 275)" font-family="Liberation Sans">FRONT</text>
<text x="1907.5" y="288" font-size="11" font-weight="bold" fill="#000" text-anchor="middle" transform="rotate(-18 1907.5 288)" font-family="Liberation Sans" stroke="#fff" stroke-width="1.6" paint-order="stroke">W</text>
<text x="1955" y="302.5" font-size="12" font-weight="bold" fill="#000" text-anchor="middle" transform="rotate(20 1955 302.5)" font-family="Liberation Sans" stroke="#fff" stroke-width="1.6" paint-order="stroke">S</text>
<text x="1968" y="272" font-size="7.5" font-weight="bold" fill="#000" text-anchor="middle" transform="rotate(50 1968 272)" font-family="Liberation Sans" stroke="#fff" stroke-width="1.2" paint-order="stroke">E</text>
</svg>
<!-- axis triad -->
<svg style="left:855px;top:750px" width="70" height="55" viewBox="855 750 70 55">
<text x="882" y="765" font-size="8.5" fill="#333" text-anchor="middle" font-family="Liberation Sans">Z</text>
<text x="909.5" y="785.5" font-size="8.5" fill="#333" text-anchor="middle" font-family="Liberation Sans">X</text>
<text x="870.5" y="776.5" font-size="8" fill="#444" text-anchor="middle" font-family="Liberation Sans">Y</text>
<path d="M876.5,782 L876.5,792" stroke="#000" stroke-width="1.6"/><path d="M876.5,770 L873.5,780 Q876.5,782.5 879.5,780 Z" fill="#000"/>
<path d="M880,793.5 L893,790.5" stroke="#000" stroke-width="1.8"/><polygon points="905,789 894,787.5 894.5,794" fill="#000"/>
<path d="M875,791 L867,782" stroke="#000" stroke-width="1.8"/><circle cx="869.5" cy="786" r="2.2" fill="none" stroke="#000" stroke-width="1.1"/><polygon points="866.5,781 870,782.5 868,784.5" fill="#000"/>
<rect x="873.5" y="791" width="6.5" height="6.5" rx="1.5" fill="#000"/>
</svg>
<!--PLATE-->
<svg class="a" style="left:0;top:0" width="2048" height="1242" viewBox="0 0 2048 1242">
<defs>
<linearGradient id="gw" gradientUnits="userSpaceOnUse" x1="892" y1="0" x2="1893" y2="0">
<stop offset="0" stop-color="#a2a2a2"/><stop offset="0.03" stop-color="#ababab"/><stop offset="0.09" stop-color="#a2a2a2"/><stop offset="0.11" stop-color="#a8a8a8"/>
<stop offset="0.135" stop-color="#9a9a9a"/><stop offset="0.148" stop-color="#848484"/><stop offset="0.16" stop-color="#6a6a6a"/><stop offset="0.2" stop-color="#666"/>
<stop offset="0.96" stop-color="#646464"/><stop offset="0.978" stop-color="#7c7c7c"/><stop offset="0.988" stop-color="#9a9a9a"/><stop offset="1" stop-color="#6a6a6a"/>
</linearGradient>
<linearGradient id="gt" gradientUnits="userSpaceOnUse" x1="900" y1="540" x2="1890" y2="380">
<stop offset="0" stop-color="#c6c6c6"/><stop offset="0.25" stop-color="#d2d2d2"/><stop offset="0.55" stop-color="#c8c8c8"/><stop offset="1" stop-color="#bcbcbc"/>
</linearGradient>
<linearGradient id="gh" gradientUnits="userSpaceOnUse" x1="1335" y1="0" x2="1449" y2="0">
<stop offset="0" stop-color="#5e5e5e"/><stop offset="0.35" stop-color="#6e6e6e"/><stop offset="0.55" stop-color="#8e8e8e"/><stop offset="0.7" stop-color="#a5a5a5"/><stop offset="1" stop-color="#b0b0b0"/>
</linearGradient>
<clipPath id="hc"><polygon points="1445.6,519.8 1447.9,523.3 1449.1,527.0 1449.4,530.7 1448.8,534.5 1447.1,538.1 1444.6,541.6 1441.1,544.9 1436.8,547.9 1431.8,550.6 1426.1,553.0 1419.8,554.9 1413.0,556.5 1405.9,557.5 1398.6,558.1 1391.1,558.3 1383.7,557.9 1376.4,557.0 1369.4,555.7 1362.8,553.9 1356.7,551.8 1351.3,549.2 1346.5,546.3 1342.5,543.1 1339.4,539.7 1337.1,536.2 1335.9,532.5 1335.6,528.8 1336.2,525.0 1337.9,521.4 1340.4,517.9 1343.9,514.6 1348.2,511.6 1353.2,508.9 1358.9,506.5 1365.2,504.6 1372.0,503.0 1379.1,502.0 1386.4,501.4 1393.9,501.2 1401.3,501.6 1408.6,502.5 1415.6,503.8 1422.2,505.6 1428.3,507.7 1433.7,510.3 1438.5,513.2 1442.5,516.4"/></clipPath>
<filter id="brush" x="0" y="0" width="1" height="1" filterUnits="objectBoundingBox"><feTurbulence type="fractalNoise" baseFrequency="0.004 0.3" numOctaves="2" seed="11"/><feColorMatrix type="matrix" values="1.6 0 0 0 -0.3  1.6 0 0 0 -0.3  1.6 0 0 0 -0.3  0 0 0 0 0.08"/><feGaussianBlur stdDeviation="0.6"/></filter>
<clipPath id="topclip"><polygon points="895.0,541.7 893.5,539.3 892.6,536.9 892.4,534.4 892.9,531.9 894.0,529.5 895.7,527.2 898.0,525.0 900.8,523.0 904.2,521.1 908.0,519.6 912.2,518.3 916.7,517.2 1731.6,364.2 1736.3,363.4 1741.2,363.0 1746.2,363.0 1751.1,363.2 1756.0,363.8 1760.6,364.7 1765.0,365.8 1769.1,367.3 1772.7,369.0 1775.9,370.9 1778.6,373.0 1780.7,375.3 1890.0,517.8 1891.5,520.2 1892.4,522.6 1892.6,525.1 1892.1,527.6 1891.0,530.0 1889.3,532.3 1887.0,534.5 1884.2,536.5 1880.8,538.4 1877.0,539.9 1872.8,541.2 1868.3,542.3 1053.4,695.3 1048.7,696.1 1043.8,696.5 1038.8,696.5 1033.9,696.3 1029.0,695.7 1024.4,694.8 1020.0,693.7 1015.9,692.2 1012.3,690.5 1009.1,688.6 1006.4,686.5 1004.3,684.2"/></clipPath>
</defs>
<polygon points="1892.6,525.1 1892.1,527.6 1891.0,530.0 1889.3,532.3 1887.0,534.5 1884.2,536.5 1880.8,538.4 1877.0,539.9 1872.8,541.2 1868.3,542.3 1053.4,695.3 1048.7,696.1 1043.8,696.5 1038.8,696.5 1033.9,696.3 1029.0,695.7 1024.4,694.8 1020.0,693.7 1015.9,692.2 1012.3,690.5 1009.1,688.6 1006.4,686.5 1004.3,684.2 895.0,541.7 893.5,539.3 892.6,536.9 892.4,534.4 892.4,583.4 892.6,585.9 893.5,588.3 895.0,590.7 1004.3,733.2 1006.4,735.5 1009.1,737.6 1012.3,739.5 1015.9,741.2 1020.0,742.7 1024.4,743.8 1029.0,744.7 1033.9,745.3 1038.8,745.5 1043.8,745.5 1048.7,745.1 1053.4,744.3 1868.3,591.3 1872.8,590.2 1877.0,588.9 1880.8,587.4 1884.2,585.5 1887.0,583.5 1889.3,581.3 1891.0,579.0 1892.1,576.6 1892.6,574.1" fill="url(#gw)"/>
<polygon points="895.0,541.7 893.5,539.3 892.6,536.9 892.4,534.4 892.9,531.9 894.0,529.5 895.7,527.2 898.0,525.0 900.8,523.0 904.2,521.1 908.0,519.6 912.2,518.3 916.7,517.2 1731.6,364.2 1736.3,363.4 1741.2,363.0 1746.2,363.0 1751.1,363.2 1756.0,363.8 1760.6,364.7 1765.0,365.8 1769.1,367.3 1772.7,369.0 1775.9,370.9 1778.6,373.0 1780.7,375.3 1890.0,517.8 1891.5,520.2 1892.4,522.6 1892.6,525.1 1892.1,527.6 1891.0,530.0 1889.3,532.3 1887.0,534.5 1884.2,536.5 1880.8,538.4 1877.0,539.9 1872.8,541.2 1868.3,542.3 1053.4,695.3 1048.7,696.1 1043.8,696.5 1038.8,696.5 1033.9,696.3 1029.0,695.7 1024.4,694.8 1020.0,693.7 1015.9,692.2 1012.3,690.5 1009.1,688.6 1006.4,686.5 1004.3,684.2" fill="url(#gt)"/>
<g clip-path="url(#topclip)"><g transform="rotate(-10.7 1390 530)"><rect x="780" y="200" width="1240" height="660" fill="#888" filter="url(#brush)"/></g></g>
<polygon points="1445.6,519.8 1447.9,523.3 1449.1,527.0 1449.4,530.7 1448.8,534.5 1447.1,538.1 1444.6,541.6 1441.1,544.9 1436.8,547.9 1431.8,550.6 1426.1,553.0 1419.8,554.9 1413.0,556.5 1405.9,557.5 1398.6,558.1 1391.1,558.3 1383.7,557.9 1376.4,557.0 1369.4,555.7 1362.8,553.9 1356.7,551.8 1351.3,549.2 1346.5,546.3 1342.5,543.1 1339.4,539.7 1337.1,536.2 1335.9,532.5 1335.6,528.8 1336.2,525.0 1337.9,521.4 1340.4,517.9 1343.9,514.6 1348.2,511.6 1353.2,508.9 1358.9,506.5 1365.2,504.6 1372.0,503.0 1379.1,502.0 1386.4,501.4 1393.9,501.2 1401.3,501.6 1408.6,502.5 1415.6,503.8 1422.2,505.6 1428.3,507.7 1433.7,510.3 1438.5,513.2 1442.5,516.4" fill="url(#gh)"/>
<polygon points="1445.6,568.8 1447.9,572.3 1449.1,576.0 1449.4,579.7 1448.8,583.5 1447.1,587.1 1444.6,590.6 1441.1,593.9 1436.8,596.9 1431.8,599.6 1426.1,602.0 1419.8,603.9 1413.0,605.5 1405.9,606.5 1398.6,607.1 1391.1,607.3 1383.7,606.9 1376.4,606.0 1369.4,604.7 1362.8,602.9 1356.7,600.8 1351.3,598.2 1346.5,595.3 1342.5,592.1 1339.4,588.7 1337.1,585.2 1335.9,581.5 1335.6,577.8 1336.2,574.0 1337.9,570.4 1340.4,566.9 1343.9,563.6 1348.2,560.6 1353.2,557.9 1358.9,555.5 1365.2,553.6 1372.0,552.0 1379.1,551.0 1386.4,550.4 1393.9,550.2 1401.3,550.6 1408.6,551.5 1415.6,552.8 1422.2,554.6 1428.3,556.7 1433.7,559.3 1438.5,562.2 1442.5,565.4" fill="#dcecfb" stroke="#000" stroke-width="1.4" clip-path="url(#hc)"/>
<polygon points="1445.6,519.8 1447.9,523.3 1449.1,527.0 1449.4,530.7 1448.8,534.5 1447.1,538.1 1444.6,541.6 1441.1,544.9 1436.8,547.9 1431.8,550.6 1426.1,553.0 1419.8,554.9 1413.0,556.5 1405.9,557.5 1398.6,558.1 1391.1,558.3 1383.7,557.9 1376.4,557.0 1369.4,555.7 1362.8,553.9 1356.7,551.8 1351.3,549.2 1346.5,546.3 1342.5,543.1 1339.4,539.7 1337.1,536.2 1335.9,532.5 1335.6,528.8 1336.2,525.0 1337.9,521.4 1340.4,517.9 1343.9,514.6 1348.2,511.6 1353.2,508.9 1358.9,506.5 1365.2,504.6 1372.0,503.0 1379.1,502.0 1386.4,501.4 1393.9,501.2 1401.3,501.6 1408.6,502.5 1415.6,503.8 1422.2,505.6 1428.3,507.7 1433.7,510.3 1438.5,513.2 1442.5,516.4" fill="none" stroke="#111" stroke-width="1.2"/>
<polyline points="1892.6,525.1 1892.1,527.6 1891.0,530.0 1889.3,532.3 1887.0,534.5 1884.2,536.5 1880.8,538.4 1877.0,539.9 1872.8,541.2 1868.3,542.3 1053.4,695.3 1048.7,696.1 1043.8,696.5 1038.8,696.5 1033.9,696.3 1029.0,695.7 1024.4,694.8 1020.0,693.7 1015.9,692.2 1012.3,690.5 1009.1,688.6 1006.4,686.5 1004.3,684.2 895.0,541.7 893.5,539.3 892.6,536.9 892.4,534.4" fill="none" stroke="#222" stroke-width="1"/>
<polygon points="892.4,534.4 892.9,531.9 894.0,529.5 895.7,527.2 898.0,525.0 900.8,523.0 904.2,521.1 908.0,519.6 912.2,518.3 916.7,517.2 1731.6,364.2 1736.3,363.4 1741.2,363.0 1746.2,363.0 1751.1,363.2 1756.0,363.8 1760.6,364.7 1765.0,365.8 1769.1,367.3 1772.7,369.0 1775.9,370.9 1778.6,373.0 1780.7,375.3 1890.0,517.8 1891.5,520.2 1892.4,522.6 1892.6,525.1 1892.6,574.1 1892.1,576.6 1891.0,579.0 1889.3,581.3 1887.0,583.5 1884.2,585.5 1880.8,587.4 1877.0,588.9 1872.8,590.2 1868.3,591.3 1053.4,744.3 1048.7,745.1 1043.8,745.5 1038.8,745.5 1033.9,745.3 1029.0,744.7 1024.4,743.8 1020.0,742.7 1015.9,741.2 1012.3,739.5 1009.1,737.6 1006.4,735.5 1004.3,733.2 895.0,590.7 893.5,588.3 892.6,585.9 892.4,583.4" fill="none" stroke="#000" stroke-width="1.4"/>
</svg>
<!--/PLATE-->

<!-- ===== BOTTOM BAR ===== -->
<div class="a" style="left:0;top:1218px;width:2048px;height:24px;background:#f9fafc"></div>
<div class="a" style="left:0;top:1220px;width:2048px;height:2px;background:#bdbdbd"></div>

<!-- model tab -->
<div class="a" style="left:2px;top:1221px;width:42px;height:20px;background:#fff;border:1px solid #d8d8d8;border-top:none"></div>
<div class="a" style="left:2px;top:1239px;width:42px;height:2px;background:#f7901e"></div>
<div class="t" style="left:10px;top:1226px;font-size:10px;color:#333">Model</div>
<!-- right status -->
<svg style="left:1490px;top:1218px" width="558" height="24" viewBox="1490 1218 558 24">
<rect x="1495.5" y="1225.5" width="5" height="4.5" rx="0.8" fill="#3d86d4"/><rect x="1501.5" y="1231.5" width="5.5" height="5" rx="0.8" fill="#3d86d4"/><path d="M1500.5,1227.5 L1504,1227.5 L1504,1231" stroke="#3d86d4" stroke-width="0.9" fill="none"/>
<rect x="1514" y="1227" width="10" height="1.5" fill="#9aa8e0"/><rect x="1514" y="1229.5" width="10" height="1.5" fill="#55e0f0"/><rect x="1514" y="1232" width="10" height="1.5" fill="#ff9a50"/><rect x="1514" y="1234.5" width="10" height="1.5" fill="#7de07d"/><rect x="1514" y="1237" width="10" height="1.5" fill="#ff40ff"/>
<rect x="1532" y="1223.8" width="64" height="15.6" fill="#dfe8f4" stroke="#333" stroke-width="1"/>
<rect x="1532.5" y="1224.3" width="63" height="4.5" fill="#6d98cc"/>
<rect x="1532.5" y="1229.5" width="63" height="2.5" fill="#000"/>
<path d="M1598.5,1222 V1241" stroke="#bbb" stroke-width="1"/>
<rect x="1601.5" y="1223.5" width="121" height="16.5" fill="#fff" stroke="#cfcfcf" stroke-width="1"/>
<path d="M1710.5,1224 V1240" stroke="#d8d8d8" stroke-width="1"/>
<polygon points="1713.5,1230 1719,1230 1716.25,1233" fill="#333"/>
<polygon points="1734,1226 1739.5,1228.5 1739.5,1234 1734,1237 1728.5,1234 1728.5,1228.5" fill="#777"/><polygon points="1734,1226 1739.5,1228.5 1734,1231 1728.5,1228.5" fill="#aaa"/><path d="M1728.5,1231.5 L1734,1234 L1739.5,1231.5" stroke="#5b9bd5" stroke-width="1" fill="none"/>
<polygon points="1752,1225.5 1758,1228.5 1758,1234.5 1752,1237.5 1746,1234.5 1746,1228.5" fill="#3d86d4"/><polygon points="1752,1225.5 1758,1228.5 1752,1231.5 1746,1228.5" fill="#9cc6f0"/>
<path d="M1765.5,1226.5 V1237" stroke="#3a5a80" stroke-width="1.6"/><polygon points="1767,1231.7 1776.9,1226.4 1776.9,1237" fill="#3a5a80"/>
<polygon points="1785.3,1231.7 1793.7,1226.4 1793.7,1237" fill="#3a5a80"/>
<rect x="1801.5" y="1223.3" width="32.3" height="16.5" fill="#fff" stroke="#d0d0d0" stroke-width="1"/>
<polygon points="1850.7,1231.7 1842.3,1226.4 1842.3,1237" fill="#3a5a80"/>
<polygon points="1868,1231.7 1859.1,1226.4 1859.1,1237" fill="#3a5a80"/><path d="M1869.7,1226.5 V1237" stroke="#3a5a80" stroke-width="1.6"/>
<path d="M1875.6,1225 V1239" stroke="#bbb" stroke-width="1"/>
<circle cx="1886.6" cy="1231.4" r="5.8" fill="none" stroke="#4a8bd0" stroke-width="1" stroke-dasharray="1.5,1.5"/>
<rect x="1896" y="1222.2" width="17.7" height="18.3" fill="#f7901e"/>
<path d="M1900,1236 L1900,1226.5 L1910,1226.5 L1910,1232" stroke="#3a8a20" stroke-width="1.1" fill="none"/><circle cx="1910" cy="1233" r="1" fill="#802080"/><circle cx="1904" cy="1236.5" r="1" fill="#802080"/>
<path d="M1915.7,1223 V1240" stroke="#bbb" stroke-width="1"/>
<rect x="1918" y="1222.2" width="17.6" height="18.3" fill="#f7901e"/>
<rect x="1936.5" y="1222.2" width="17.6" height="18.3" fill="#f7901e"/>
<rect x="1955" y="1222.2" width="17.6" height="18.3" fill="#f7901e"/>
<rect x="1973.3" y="1222.2" width="17.6" height="18.3" fill="#f7901e"/>
<rect x="1991.6" y="1222.2" width="17.6" height="18.3" fill="#f7901e"/>
<rect x="2009.9" y="1222.2" width="17.6" height="18.3" fill="#f7901e"/>
<rect x="2028.2" y="1222.2" width="17.6" height="18.3" fill="#f7901e"/>
<path d="M1922,1237 L1922,1230 Q1922,1225.5 1926,1225.5 Q1930,1225.5 1930,1230 L1930,1237" stroke="#5577aa" stroke-width="1.8" fill="none"/><circle cx="1932.5" cy="1229" r="0.9" fill="#5b9bd5"/><circle cx="1932.5" cy="1234" r="0.9" fill="#5b9bd5"/>
<path d="M1940,1238 L1952,1226" stroke="#777" stroke-width="0.9"/><circle cx="1943" cy="1235" r="3.6" fill="#ee0000"/>
<path d="M1956,1239 L1971,1225" stroke="#777" stroke-width="0.9"/><circle cx="1963.5" cy="1231.5" r="2.8" fill="#0000ee"/>
<circle cx="1982" cy="1231.5" r="6" fill="none" stroke="#999" stroke-width="1"/><circle cx="1982" cy="1231.5" r="3.5" fill="#00e000"/>
<path d="M1994,1238 Q1996,1227 2004,1227" stroke="#888" stroke-width="1" fill="none"/><circle cx="2000.5" cy="1227" r="3" fill="#ff30ff"/>
<path d="M2018,1225 V1230 H2024 V1234" stroke="#aa8855" stroke-width="0.9" fill="none"/><circle cx="2016" cy="1235.5" r="2.5" fill="#d6b030"/>
<path d="M2029.5,1224 L2045,1239.5 M2045,1224 L2029.5,1239.5" stroke="#777" stroke-width="1"/><circle cx="2037.3" cy="1231.7" r="2.2" fill="#000"/>
</svg>
<div class="t" style="left:1605px;top:1226px;font-size:10px;color:#333">Schneiden_Uhrzeiger</div>
<div class="t" style="left:1805px;top:1226px;font-size:10px;color:#444">1-255</div>

</body></html>
